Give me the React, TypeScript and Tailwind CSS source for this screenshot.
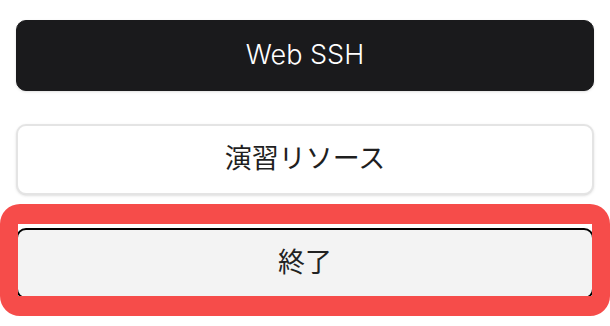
import React from "react";

const font = { fontFamily: '"Inter", "Noto Sans CJK JP", sans-serif' };

function ActionButton({
  label,
  variant,
}: {
  label: string;
  variant: "dark" | "outline" | "focused";
}) {
  const styles = {
    dark: "bg-[#1a1a1c] text-white border border-[#1a1a1c] shadow-sm font-light",
    outline: "bg-white text-[#1f1f1f] border-2 border-[#e4e4e4] shadow-sm",
    focused: "bg-[#f3f3f3] text-[#222] border-2 border-black",
  }[variant];

  return (
    <button
      className={`w-full h-[71px] rounded-[10px] flex items-center justify-center text-[27px] ${styles}`}
    >
      {label}
    </button>
  );
}

export default function App() {
  return (
    <div className="w-[610px] h-[326px] bg-white overflow-hidden" style={font}>
      <div className="flex flex-col gap-[33px] px-4 pt-5">
        <ActionButton label="Web SSH" variant="dark" />
        <ActionButton label="演習リソース" variant="outline" />
        <div className="relative">
          <ActionButton label="終了" variant="focused" />
          {/* highlight overlay */}
          <div className="absolute left-[-16px] right-[-16px] top-[-24px] bottom-[-17px] rounded-[20px] border-[#f64c4a] border-x-[18px] border-t-[20px] border-b-[20px] pointer-events-none" />
        </div>
      </div>
    </div>
  );
}
